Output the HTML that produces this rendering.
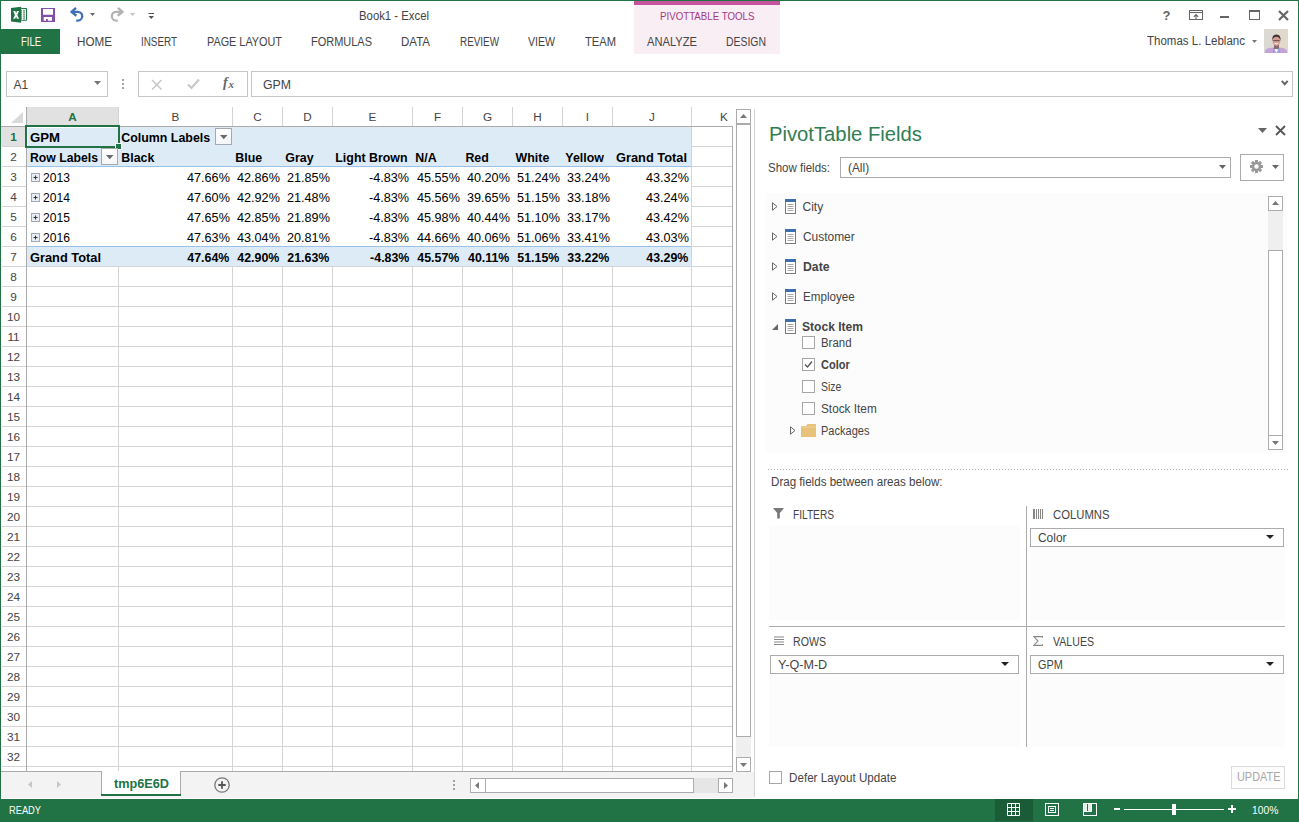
<!DOCTYPE html>
<html><head><meta charset="utf-8"><title>Book1 - Excel</title>
<style>
html,body{margin:0;padding:0;}
body{width:1299px;height:822px;overflow:hidden;position:relative;background:#fff;font-family:"Liberation Sans",sans-serif;}
.a{position:absolute;}
.t{position:absolute;white-space:nowrap;transform-origin:0 0;}
</style></head><body>
<div class="a" style="left:634px;top:1px;width:146px;height:53px;background:#FAEEF5;"></div>
<div class="a" style="left:634px;top:1px;width:146px;height:4px;background:#C5539E;"></div>
<div class="t" style="left:659.50px;top:10.69px;font-size:11px;line-height:11px;color:#9E3A85;transform:scaleX(0.8833);">PIVOTTABLE TOOLS</div>
<div class="t" style="left:359.00px;top:10.34px;font-size:12px;line-height:12px;color:#444444;transform:scaleX(0.9455);">Book1 - Excel</div>
<svg class="a" style="left:11px;top:6px;" width="17" height="18" viewBox="0 0 17 18"><rect x="10" y="1.9" width="6.1" height="12.8" rx="1" fill="#1F7244"/>
<path d="M0 2 L10.2 0.8 V16.8 L0 15.6 Z" fill="#1F7244"/>
<rect x="10.2" y="3.1" width="4.8" height="10.8" fill="#fff"/>
<path d="M12.1 4.9 H14 M12.1 6.9 H14 M12.1 8.9 H14 M12.1 10.9 H14 M12.1 12.9 H14 M10 4.9 H11.1 M10 6.9 H11.1 M10 8.9 H11.1 M10 10.9 H11.1 M10 12.9 H11.1" stroke="#1F7244" stroke-width="1"/>
<path d="M2.2 5 L4.3 5 L5.1 7.1 L5.9 5 L8 5 L6.3 8.9 L8.1 12.8 L6 12.8 L5.1 10.7 L4.2 12.8 L2.1 12.8 L3.9 8.9 Z" fill="#fff"/></svg>
<svg class="a" style="left:41px;top:8px;" width="14" height="14" viewBox="0 0 14 14"><path d="M0 0 H14 V14 H0 Z M2 1 V6.8 H12 V1 Z M2.7 9 V12.7 H11 V9 Z" fill="#8350A7" fill-rule="evenodd"/>
<rect x="5" y="11" width="1.8" height="2" fill="#8350A7"/></svg>
<svg class="a" style="left:68px;top:6px;" width="18" height="17" viewBox="0 0 18 17"><path d="M3.5 5.8 H9.8 A4.4 4.4 0 0 1 9.8 14.6 H8.2" fill="none" stroke="#3E70B8" stroke-width="2.3"/>
<path d="M8 1.8 L3.6 5.9 L8.4 9.8" fill="none" stroke="#3E70B8" stroke-width="2.4"/></svg>
<svg class="a" style="left:90px;top:13px;" width="6" height="4" viewBox="0 0 6 4"><path d="M0 0 H5 L2.5 3 Z" fill="#666"/></svg>
<svg class="a" style="left:108px;top:6px;" width="18" height="17" viewBox="0 0 18 17"><path d="M14.5 5.8 H8.2 A4.4 4.4 0 0 0 8.2 14.6 H9.8" fill="none" stroke="#B3B3B3" stroke-width="2.3"/>
<path d="M10 1.8 L14.4 5.9 L9.6 9.8" fill="none" stroke="#B3B3B3" stroke-width="2.4"/></svg>
<svg class="a" style="left:130px;top:13px;" width="6" height="4" viewBox="0 0 6 4"><path d="M0 0 H5 L2.5 3 Z" fill="#C0C0C0"/></svg>
<svg class="a" style="left:148px;top:12px;" width="7" height="8" viewBox="0 0 7 8"><path d="M0.5 1.5 H6" stroke="#555" stroke-width="1"/><path d="M0.5 4 H6 L3.25 7 Z" fill="#555"/></svg>
<div class="t" style="left:1162.50px;top:8.80px;font-size:13px;line-height:13px;font-weight:bold;color:#666;">?</div>
<svg class="a" style="left:1189px;top:10px;" width="14" height="11" viewBox="0 0 14 11"><rect x="0.5" y="0.5" width="13" height="9" fill="none" stroke="#666"/>
<path d="M0.5 2.5 H13.5" stroke="#666"/>
<path d="M7 9.5 V4.5 M4.8 6.8 L7 4.5 L9.2 6.8" fill="none" stroke="#666" stroke-width="1.1"/></svg>
<div class="a" style="left:1220px;top:16px;width:9px;height:2px;background:#666;"></div>
<svg class="a" style="left:1249px;top:10px;" width="11" height="11" viewBox="0 0 11 11"><rect x="0.5" y="0.5" width="10" height="9" fill="none" stroke="#666"/><rect x="0" y="0" width="11" height="2" fill="#666"/></svg>
<svg class="a" style="left:1278px;top:10px;" width="11" height="11" viewBox="0 0 11 11"><path d="M1 1 L10 10 M10 1 L1 10" stroke="#666" stroke-width="2.2"/></svg>
<div class="a" style="left:1px;top:29px;width:59px;height:25px;background:#217346;"></div>
<div class="t" style="left:21.00px;top:35.84px;font-size:12px;line-height:12px;color:#fff;transform:scaleX(0.7892);">FILE</div>
<div class="t" style="left:77.00px;top:35.84px;font-size:12px;line-height:12px;color:#444444;transform:scaleX(0.9722);">HOME</div>
<div class="t" style="left:141.00px;top:35.84px;font-size:12px;line-height:12px;color:#444444;transform:scaleX(0.8222);">INSERT</div>
<div class="t" style="left:207.00px;top:35.84px;font-size:12px;line-height:12px;color:#444444;transform:scaleX(0.9046);">PAGE LAYOUT</div>
<div class="t" style="left:311.00px;top:35.84px;font-size:12px;line-height:12px;color:#444444;transform:scaleX(0.9149);">FORMULAS</div>
<div class="t" style="left:401.00px;top:35.84px;font-size:12px;line-height:12px;color:#444444;transform:scaleX(0.9595);">DATA</div>
<div class="t" style="left:459.50px;top:35.84px;font-size:12px;line-height:12px;color:#444444;transform:scaleX(0.8239);">REVIEW</div>
<div class="t" style="left:528.00px;top:35.84px;font-size:12px;line-height:12px;color:#444444;transform:scaleX(0.8804);">VIEW</div>
<div class="t" style="left:584.50px;top:35.84px;font-size:12px;line-height:12px;color:#444444;transform:scaleX(0.9300);">TEAM</div>
<div class="t" style="left:647.00px;top:35.84px;font-size:12px;line-height:12px;color:#444444;transform:scaleX(0.9294);">ANALYZE</div>
<div class="t" style="left:726.00px;top:35.84px;font-size:12px;line-height:12px;color:#444444;transform:scaleX(0.8694);">DESIGN</div>
<div class="t" style="left:1147.00px;top:34.84px;font-size:12px;line-height:12px;color:#444444;transform:scaleX(0.9602);">Thomas L. Leblanc</div>
<svg class="a" style="left:1252px;top:40px;" width="6" height="4" viewBox="0 0 6 4"><path d="M0 0 H5 L2.5 3 Z" fill="#777"/></svg>
<svg class="a" style="left:1264px;top:29px;" width="24" height="24" viewBox="0 0 24 24"><rect width="24" height="24" fill="#DCD9D2"/>
<rect x="14" y="0" width="10" height="24" fill="#E0D9CC"/>
<path d="M1 24 V21.5 Q3 19 9 18.5 H15.5 Q21.5 19 23 21.5 V24 Z" fill="#C3A4D8"/>
<rect x="10" y="16" width="5" height="4" fill="#8A6A70"/>
<path d="M9.6 19 V24 M15 19 V24" stroke="#55B2D6" stroke-width="0.9"/>
<path d="M10.6 20.2 H14.2 L12.4 23.4 Z" fill="#fff"/>
<ellipse cx="12.4" cy="11.4" rx="4" ry="5.3" fill="#D59C93"/>
<path d="M8.2 12 Q7.8 5.5 12.4 5.6 Q17 5.5 16.6 12 Q16 8 12.4 7.8 Q8.8 8 8.2 12 Z" fill="#3E3434"/>
<path d="M9.2 11.6 H15.6" stroke="#6A4E50" stroke-width="1"/>
<path d="M10.6 14.3 Q12.4 15.6 14.2 14.3" fill="none" stroke="#fff" stroke-width="0.9"/></svg>
<div class="a" style="left:6px;top:71px;width:102px;height:26px;background:#fff;box-shadow:inset 0 0 0 1px #C6C6C6;"></div>
<div class="t" style="left:13.50px;top:78.84px;font-size:12px;line-height:12px;color:#444444;">A1</div>
<svg class="a" style="left:94px;top:81px;" width="8" height="5" viewBox="0 0 8 5"><path d="M0 0 H7 L3.5 4 Z" fill="#777"/></svg>
<div class="a" style="left:122px;top:79px;width:2px;height:2px;background:#A3A3A3;"></div>
<div class="a" style="left:122px;top:83px;width:2px;height:2px;background:#A3A3A3;"></div>
<div class="a" style="left:122px;top:87px;width:2px;height:2px;background:#A3A3A3;"></div>
<div class="a" style="left:138px;top:71px;width:110px;height:26px;background:#fff;box-shadow:inset 0 0 0 1px #C6C6C6;"></div>
<svg class="a" style="left:151px;top:79px;" width="12" height="12" viewBox="0 0 12 12"><path d="M1 1 L10.5 10.5 M10.5 1 L1 10.5" stroke="#C4C4C4" stroke-width="1.4"/></svg>
<svg class="a" style="left:187px;top:78px;" width="13" height="12" viewBox="0 0 13 12"><path d="M1 6.5 L4.5 10 L12 1.5" fill="none" stroke="#C8C8C8" stroke-width="2.2"/></svg>
<div class="t" style="left:223px;top:76px;font-family:'Liberation Serif',serif;font-style:italic;font-weight:bold;font-size:14px;line-height:14px;color:#666;">f</div>
<div class="t" style="left:228.5px;top:78.5px;font-family:'Liberation Serif',serif;font-style:italic;font-weight:bold;font-size:11px;line-height:11px;color:#666;">x</div>
<div class="a" style="left:251px;top:71px;width:1042px;height:26px;background:#fff;box-shadow:inset 0 0 0 1px #C6C6C6;"></div>
<div class="t" style="left:263.00px;top:78.84px;font-size:12px;line-height:12px;color:#444444;transform:scaleX(1.0244);">GPM</div>
<svg class="a" style="left:1281px;top:80px;" width="8" height="6" viewBox="0 0 8 6"><path d="M0.8 0.8 L3.75 4.2 L6.7 0.8" fill="none" stroke="#666" stroke-width="2"/></svg>
<div class="a" style="left:118px;top:107px;width:1px;height:19px;background:#D4D4D4;"></div>
<div class="a" style="left:232px;top:107px;width:1px;height:19px;background:#D4D4D4;"></div>
<div class="a" style="left:282px;top:107px;width:1px;height:19px;background:#D4D4D4;"></div>
<div class="a" style="left:332px;top:107px;width:1px;height:19px;background:#D4D4D4;"></div>
<div class="a" style="left:412px;top:107px;width:1px;height:19px;background:#D4D4D4;"></div>
<div class="a" style="left:462px;top:107px;width:1px;height:19px;background:#D4D4D4;"></div>
<div class="a" style="left:512px;top:107px;width:1px;height:19px;background:#D4D4D4;"></div>
<div class="a" style="left:562px;top:107px;width:1px;height:19px;background:#D4D4D4;"></div>
<div class="a" style="left:612px;top:107px;width:1px;height:19px;background:#D4D4D4;"></div>
<div class="a" style="left:691px;top:107px;width:1px;height:19px;background:#D4D4D4;"></div>
<div class="a" style="left:27px;top:107px;width:91px;height:19px;background:#E1E1E1;"></div>
<svg class="a" style="left:11px;top:112px;" width="13" height="12" viewBox="0 0 13 12"><path d="M12 0 V11 H0 Z" fill="#DADADA"/></svg>
<div class="t" style="left:68.28px;top:110.80px;font-size:11.7px;line-height:11.7px;font-weight:bold;color:#217346;">A</div>
<div class="t" style="left:171.60px;top:110.80px;font-size:11.7px;line-height:11.7px;color:#444444;">B</div>
<div class="t" style="left:253.28px;top:110.80px;font-size:11.7px;line-height:11.7px;color:#444444;">C</div>
<div class="t" style="left:303.28px;top:110.80px;font-size:11.7px;line-height:11.7px;color:#444444;">D</div>
<div class="t" style="left:368.60px;top:110.80px;font-size:11.7px;line-height:11.7px;color:#444444;">E</div>
<div class="t" style="left:433.93px;top:110.80px;font-size:11.7px;line-height:11.7px;color:#444444;">F</div>
<div class="t" style="left:482.95px;top:110.80px;font-size:11.7px;line-height:11.7px;color:#444444;">G</div>
<div class="t" style="left:533.28px;top:110.80px;font-size:11.7px;line-height:11.7px;color:#444444;">H</div>
<div class="t" style="left:585.87px;top:110.80px;font-size:11.7px;line-height:11.7px;color:#444444;">I</div>
<div class="t" style="left:649.08px;top:110.80px;font-size:11.7px;line-height:11.7px;color:#444444;">J</div>
<div class="t" style="left:720.10px;top:110.80px;font-size:11.7px;line-height:11.7px;color:#444444;">K</div>
<div class="a" style="left:1px;top:126px;width:732px;height:1px;background:#ABABAB;"></div>
<div class="a" style="left:26px;top:107px;width:1px;height:665px;background:#ABABAB;"></div>
<div class="a" style="left:1px;top:127px;width:25px;height:19px;background:#E1E1E1;"></div>
<div class="a" style="left:2px;top:146px;width:24px;height:1px;background:#D4D4D4;"></div>
<div class="t" style="left:10.22px;top:132.01px;font-size:11.8px;line-height:11.8px;font-weight:bold;color:#217346;">1</div>
<div class="a" style="left:2px;top:166px;width:24px;height:1px;background:#D4D4D4;"></div>
<div class="t" style="left:10.22px;top:152.01px;font-size:11.8px;line-height:11.8px;color:#444444;">2</div>
<div class="a" style="left:2px;top:186px;width:24px;height:1px;background:#D4D4D4;"></div>
<div class="t" style="left:10.22px;top:172.01px;font-size:11.8px;line-height:11.8px;color:#444444;">3</div>
<div class="a" style="left:2px;top:206px;width:24px;height:1px;background:#D4D4D4;"></div>
<div class="t" style="left:10.22px;top:192.01px;font-size:11.8px;line-height:11.8px;color:#444444;">4</div>
<div class="a" style="left:2px;top:226px;width:24px;height:1px;background:#D4D4D4;"></div>
<div class="t" style="left:10.22px;top:212.01px;font-size:11.8px;line-height:11.8px;color:#444444;">5</div>
<div class="a" style="left:2px;top:246px;width:24px;height:1px;background:#D4D4D4;"></div>
<div class="t" style="left:10.22px;top:232.01px;font-size:11.8px;line-height:11.8px;color:#444444;">6</div>
<div class="a" style="left:2px;top:266px;width:24px;height:1px;background:#D4D4D4;"></div>
<div class="t" style="left:10.22px;top:252.01px;font-size:11.8px;line-height:11.8px;color:#444444;">7</div>
<div class="a" style="left:2px;top:286px;width:24px;height:1px;background:#D4D4D4;"></div>
<div class="t" style="left:10.22px;top:272.01px;font-size:11.8px;line-height:11.8px;color:#444444;">8</div>
<div class="a" style="left:2px;top:306px;width:24px;height:1px;background:#D4D4D4;"></div>
<div class="t" style="left:10.22px;top:292.01px;font-size:11.8px;line-height:11.8px;color:#444444;">9</div>
<div class="a" style="left:2px;top:326px;width:24px;height:1px;background:#D4D4D4;"></div>
<div class="t" style="left:6.94px;top:312.01px;font-size:11.8px;line-height:11.8px;color:#444444;">10</div>
<div class="a" style="left:2px;top:346px;width:24px;height:1px;background:#D4D4D4;"></div>
<div class="t" style="left:7.38px;top:332.01px;font-size:11.8px;line-height:11.8px;color:#444444;">11</div>
<div class="a" style="left:2px;top:366px;width:24px;height:1px;background:#D4D4D4;"></div>
<div class="t" style="left:6.94px;top:352.01px;font-size:11.8px;line-height:11.8px;color:#444444;">12</div>
<div class="a" style="left:2px;top:386px;width:24px;height:1px;background:#D4D4D4;"></div>
<div class="t" style="left:6.94px;top:372.01px;font-size:11.8px;line-height:11.8px;color:#444444;">13</div>
<div class="a" style="left:2px;top:406px;width:24px;height:1px;background:#D4D4D4;"></div>
<div class="t" style="left:6.94px;top:392.01px;font-size:11.8px;line-height:11.8px;color:#444444;">14</div>
<div class="a" style="left:2px;top:426px;width:24px;height:1px;background:#D4D4D4;"></div>
<div class="t" style="left:6.94px;top:412.01px;font-size:11.8px;line-height:11.8px;color:#444444;">15</div>
<div class="a" style="left:2px;top:446px;width:24px;height:1px;background:#D4D4D4;"></div>
<div class="t" style="left:6.94px;top:432.01px;font-size:11.8px;line-height:11.8px;color:#444444;">16</div>
<div class="a" style="left:2px;top:466px;width:24px;height:1px;background:#D4D4D4;"></div>
<div class="t" style="left:6.94px;top:452.01px;font-size:11.8px;line-height:11.8px;color:#444444;">17</div>
<div class="a" style="left:2px;top:486px;width:24px;height:1px;background:#D4D4D4;"></div>
<div class="t" style="left:6.94px;top:472.01px;font-size:11.8px;line-height:11.8px;color:#444444;">18</div>
<div class="a" style="left:2px;top:506px;width:24px;height:1px;background:#D4D4D4;"></div>
<div class="t" style="left:6.94px;top:492.01px;font-size:11.8px;line-height:11.8px;color:#444444;">19</div>
<div class="a" style="left:2px;top:526px;width:24px;height:1px;background:#D4D4D4;"></div>
<div class="t" style="left:6.94px;top:512.01px;font-size:11.8px;line-height:11.8px;color:#444444;">20</div>
<div class="a" style="left:2px;top:546px;width:24px;height:1px;background:#D4D4D4;"></div>
<div class="t" style="left:6.94px;top:532.01px;font-size:11.8px;line-height:11.8px;color:#444444;">21</div>
<div class="a" style="left:2px;top:566px;width:24px;height:1px;background:#D4D4D4;"></div>
<div class="t" style="left:6.94px;top:552.01px;font-size:11.8px;line-height:11.8px;color:#444444;">22</div>
<div class="a" style="left:2px;top:586px;width:24px;height:1px;background:#D4D4D4;"></div>
<div class="t" style="left:6.94px;top:572.01px;font-size:11.8px;line-height:11.8px;color:#444444;">23</div>
<div class="a" style="left:2px;top:606px;width:24px;height:1px;background:#D4D4D4;"></div>
<div class="t" style="left:6.94px;top:592.01px;font-size:11.8px;line-height:11.8px;color:#444444;">24</div>
<div class="a" style="left:2px;top:626px;width:24px;height:1px;background:#D4D4D4;"></div>
<div class="t" style="left:6.94px;top:612.01px;font-size:11.8px;line-height:11.8px;color:#444444;">25</div>
<div class="a" style="left:2px;top:646px;width:24px;height:1px;background:#D4D4D4;"></div>
<div class="t" style="left:6.94px;top:632.01px;font-size:11.8px;line-height:11.8px;color:#444444;">26</div>
<div class="a" style="left:2px;top:666px;width:24px;height:1px;background:#D4D4D4;"></div>
<div class="t" style="left:6.94px;top:652.01px;font-size:11.8px;line-height:11.8px;color:#444444;">27</div>
<div class="a" style="left:2px;top:686px;width:24px;height:1px;background:#D4D4D4;"></div>
<div class="t" style="left:6.94px;top:672.01px;font-size:11.8px;line-height:11.8px;color:#444444;">28</div>
<div class="a" style="left:2px;top:706px;width:24px;height:1px;background:#D4D4D4;"></div>
<div class="t" style="left:6.94px;top:692.01px;font-size:11.8px;line-height:11.8px;color:#444444;">29</div>
<div class="a" style="left:2px;top:726px;width:24px;height:1px;background:#D4D4D4;"></div>
<div class="t" style="left:6.94px;top:712.01px;font-size:11.8px;line-height:11.8px;color:#444444;">30</div>
<div class="a" style="left:2px;top:746px;width:24px;height:1px;background:#D4D4D4;"></div>
<div class="t" style="left:6.94px;top:732.01px;font-size:11.8px;line-height:11.8px;color:#444444;">31</div>
<div class="a" style="left:2px;top:766px;width:24px;height:1px;background:#D4D4D4;"></div>
<div class="t" style="left:6.94px;top:752.01px;font-size:11.8px;line-height:11.8px;color:#444444;">32</div>
<div class="a" style="left:27px;top:146px;width:705px;height:1px;background:#D4D4D4;"></div>
<div class="a" style="left:27px;top:166px;width:705px;height:1px;background:#D4D4D4;"></div>
<div class="a" style="left:27px;top:186px;width:705px;height:1px;background:#D4D4D4;"></div>
<div class="a" style="left:27px;top:206px;width:705px;height:1px;background:#D4D4D4;"></div>
<div class="a" style="left:27px;top:226px;width:705px;height:1px;background:#D4D4D4;"></div>
<div class="a" style="left:27px;top:246px;width:705px;height:1px;background:#D4D4D4;"></div>
<div class="a" style="left:27px;top:266px;width:705px;height:1px;background:#D4D4D4;"></div>
<div class="a" style="left:27px;top:286px;width:705px;height:1px;background:#D4D4D4;"></div>
<div class="a" style="left:27px;top:306px;width:705px;height:1px;background:#D4D4D4;"></div>
<div class="a" style="left:27px;top:326px;width:705px;height:1px;background:#D4D4D4;"></div>
<div class="a" style="left:27px;top:346px;width:705px;height:1px;background:#D4D4D4;"></div>
<div class="a" style="left:27px;top:366px;width:705px;height:1px;background:#D4D4D4;"></div>
<div class="a" style="left:27px;top:386px;width:705px;height:1px;background:#D4D4D4;"></div>
<div class="a" style="left:27px;top:406px;width:705px;height:1px;background:#D4D4D4;"></div>
<div class="a" style="left:27px;top:426px;width:705px;height:1px;background:#D4D4D4;"></div>
<div class="a" style="left:27px;top:446px;width:705px;height:1px;background:#D4D4D4;"></div>
<div class="a" style="left:27px;top:466px;width:705px;height:1px;background:#D4D4D4;"></div>
<div class="a" style="left:27px;top:486px;width:705px;height:1px;background:#D4D4D4;"></div>
<div class="a" style="left:27px;top:506px;width:705px;height:1px;background:#D4D4D4;"></div>
<div class="a" style="left:27px;top:526px;width:705px;height:1px;background:#D4D4D4;"></div>
<div class="a" style="left:27px;top:546px;width:705px;height:1px;background:#D4D4D4;"></div>
<div class="a" style="left:27px;top:566px;width:705px;height:1px;background:#D4D4D4;"></div>
<div class="a" style="left:27px;top:586px;width:705px;height:1px;background:#D4D4D4;"></div>
<div class="a" style="left:27px;top:606px;width:705px;height:1px;background:#D4D4D4;"></div>
<div class="a" style="left:27px;top:626px;width:705px;height:1px;background:#D4D4D4;"></div>
<div class="a" style="left:27px;top:646px;width:705px;height:1px;background:#D4D4D4;"></div>
<div class="a" style="left:27px;top:666px;width:705px;height:1px;background:#D4D4D4;"></div>
<div class="a" style="left:27px;top:686px;width:705px;height:1px;background:#D4D4D4;"></div>
<div class="a" style="left:27px;top:706px;width:705px;height:1px;background:#D4D4D4;"></div>
<div class="a" style="left:27px;top:726px;width:705px;height:1px;background:#D4D4D4;"></div>
<div class="a" style="left:27px;top:746px;width:705px;height:1px;background:#D4D4D4;"></div>
<div class="a" style="left:27px;top:766px;width:705px;height:1px;background:#D4D4D4;"></div>
<div class="a" style="left:118px;top:127px;width:1px;height:644px;background:#D4D4D4;"></div>
<div class="a" style="left:232px;top:127px;width:1px;height:644px;background:#D4D4D4;"></div>
<div class="a" style="left:282px;top:127px;width:1px;height:644px;background:#D4D4D4;"></div>
<div class="a" style="left:332px;top:127px;width:1px;height:644px;background:#D4D4D4;"></div>
<div class="a" style="left:412px;top:127px;width:1px;height:644px;background:#D4D4D4;"></div>
<div class="a" style="left:462px;top:127px;width:1px;height:644px;background:#D4D4D4;"></div>
<div class="a" style="left:512px;top:127px;width:1px;height:644px;background:#D4D4D4;"></div>
<div class="a" style="left:562px;top:127px;width:1px;height:644px;background:#D4D4D4;"></div>
<div class="a" style="left:612px;top:127px;width:1px;height:644px;background:#D4D4D4;"></div>
<div class="a" style="left:691px;top:127px;width:1px;height:644px;background:#D4D4D4;"></div>
<div class="a" style="left:732px;top:126px;width:1px;height:646px;background:#ABABAB;"></div>
<div class="a" style="left:1px;top:771px;width:732px;height:1px;background:#ABABAB;"></div>
<div class="a" style="left:27px;top:127px;width:664px;height:39px;background:#DDEBF7;"></div>
<div class="a" style="left:27px;top:166px;width:664px;height:1px;background:#9BC2E6;"></div>
<div class="a" style="left:27px;top:167px;width:664px;height:79px;background:#FFFFFF;"></div>
<div class="a" style="left:27px;top:246px;width:664px;height:1px;background:#9BC2E6;"></div>
<div class="a" style="left:27px;top:247px;width:664px;height:19px;background:#DDEBF7;"></div>
<div class="a" style="left:25px;top:125px;width:95px;height:23px;box-sizing:border-box;border:2px solid #217346;"></div>
<div class="a" style="left:27px;top:127px;width:91px;height:19px;box-sizing:border-box;border:1px solid #fff;border-right:0;border-bottom:0;"></div>
<div class="a" style="left:115px;top:143px;width:7px;height:7px;background:#fff;"></div>
<div class="a" style="left:116px;top:144px;width:5px;height:5px;background:#217346;"></div>
<div class="t" style="left:29.50px;top:131.50px;font-size:12.4px;line-height:12.4px;font-weight:bold;color:#000;transform:scaleX(1.0621);">GPM</div>
<div class="t" style="left:121.30px;top:131.50px;font-size:12.4px;line-height:12.4px;font-weight:bold;color:#000;">Column Labels</div>
<div class="t" style="left:29.50px;top:151.50px;font-size:12.4px;line-height:12.4px;font-weight:bold;color:#000;transform:scaleX(0.9869);">Row Labels</div>
<div class="a" style="left:215px;top:128px;width:17px;height:17px;background:linear-gradient(#FFFFFF,#F4F5F7);box-shadow:inset 0 0 0 1px #A5A9AE;"></div>
<svg class="a" style="left:220px;top:135px;" width="8" height="5" viewBox="0 0 8 5"><path d="M0 0 H7.5 L3.75 4.2 Z" fill="#6A6A6A"/></svg>
<div class="a" style="left:101px;top:148px;width:17px;height:17px;background:linear-gradient(#FFFFFF,#F4F5F7);box-shadow:inset 0 0 0 1px #A5A9AE;"></div>
<svg class="a" style="left:106px;top:155px;" width="8" height="5" viewBox="0 0 8 5"><path d="M0 0 H7.5 L3.75 4.2 Z" fill="#6A6A6A"/></svg>
<div class="t" style="left:121.30px;top:151.50px;font-size:12.4px;line-height:12.4px;font-weight:bold;color:#000;">Black</div>
<div class="t" style="left:235.30px;top:151.50px;font-size:12.4px;line-height:12.4px;font-weight:bold;color:#000;">Blue</div>
<div class="t" style="left:285.30px;top:151.50px;font-size:12.4px;line-height:12.4px;font-weight:bold;color:#000;">Gray</div>
<div class="t" style="left:335.30px;top:151.50px;font-size:12.4px;line-height:12.4px;font-weight:bold;color:#000;">Light Brown</div>
<div class="t" style="left:415.30px;top:151.50px;font-size:12.4px;line-height:12.4px;font-weight:bold;color:#000;">N/A</div>
<div class="t" style="left:465.40px;top:151.50px;font-size:12.4px;line-height:12.4px;font-weight:bold;color:#000;">Red</div>
<div class="t" style="left:515.60px;top:151.50px;font-size:12.4px;line-height:12.4px;font-weight:bold;color:#000;">White</div>
<div class="t" style="left:565.30px;top:151.50px;font-size:12.4px;line-height:12.4px;font-weight:bold;color:#000;">Yellow</div>
<div class="t" style="left:615.50px;top:151.50px;font-size:12.4px;line-height:12.4px;font-weight:bold;color:#000;transform:scaleX(1.0341);">Grand Total</div>
<svg class="a" style="left:31px;top:173px;" width="9" height="9" viewBox="0 0 9 9"><rect x="0.5" y="0.5" width="8" height="8" fill="#E8EDF3" stroke="#A0A8B4"/><path d="M2.5 4.5 H6.5 M4.5 2.5 V6.5" stroke="#333" stroke-width="1"/></svg>
<div class="t" style="left:42.50px;top:171.50px;font-size:12.4px;line-height:12.4px;color:#000;transform:scaleX(0.9788);">2013</div>
<div class="t" style="left:186.50px;top:171.50px;font-size:12.4px;line-height:12.4px;color:#000;transform:scaleX(1.0200);">47.66%</div>
<div class="t" style="left:236.50px;top:171.50px;font-size:12.4px;line-height:12.4px;color:#000;transform:scaleX(1.0200);">42.86%</div>
<div class="t" style="left:286.50px;top:171.50px;font-size:12.4px;line-height:12.4px;color:#000;transform:scaleX(1.0200);">21.85%</div>
<div class="t" style="left:369.33px;top:171.50px;font-size:12.4px;line-height:12.4px;color:#000;transform:scaleX(1.0200);">-4.83%</div>
<div class="t" style="left:416.50px;top:171.50px;font-size:12.4px;line-height:12.4px;color:#000;transform:scaleX(1.0200);">45.55%</div>
<div class="t" style="left:466.50px;top:171.50px;font-size:12.4px;line-height:12.4px;color:#000;transform:scaleX(1.0200);">40.20%</div>
<div class="t" style="left:516.50px;top:171.50px;font-size:12.4px;line-height:12.4px;color:#000;transform:scaleX(1.0200);">51.24%</div>
<div class="t" style="left:566.50px;top:171.50px;font-size:12.4px;line-height:12.4px;color:#000;transform:scaleX(1.0200);">33.24%</div>
<div class="t" style="left:645.50px;top:171.50px;font-size:12.4px;line-height:12.4px;color:#000;transform:scaleX(1.0200);">43.32%</div>
<svg class="a" style="left:31px;top:193px;" width="9" height="9" viewBox="0 0 9 9"><rect x="0.5" y="0.5" width="8" height="8" fill="#E8EDF3" stroke="#A0A8B4"/><path d="M2.5 4.5 H6.5 M4.5 2.5 V6.5" stroke="#333" stroke-width="1"/></svg>
<div class="t" style="left:42.50px;top:191.50px;font-size:12.4px;line-height:12.4px;color:#000;transform:scaleX(0.9788);">2014</div>
<div class="t" style="left:186.50px;top:191.50px;font-size:12.4px;line-height:12.4px;color:#000;transform:scaleX(1.0200);">47.60%</div>
<div class="t" style="left:236.50px;top:191.50px;font-size:12.4px;line-height:12.4px;color:#000;transform:scaleX(1.0200);">42.92%</div>
<div class="t" style="left:286.50px;top:191.50px;font-size:12.4px;line-height:12.4px;color:#000;transform:scaleX(1.0200);">21.48%</div>
<div class="t" style="left:369.33px;top:191.50px;font-size:12.4px;line-height:12.4px;color:#000;transform:scaleX(1.0200);">-4.83%</div>
<div class="t" style="left:416.50px;top:191.50px;font-size:12.4px;line-height:12.4px;color:#000;transform:scaleX(1.0200);">45.56%</div>
<div class="t" style="left:466.50px;top:191.50px;font-size:12.4px;line-height:12.4px;color:#000;transform:scaleX(1.0200);">39.65%</div>
<div class="t" style="left:516.50px;top:191.50px;font-size:12.4px;line-height:12.4px;color:#000;transform:scaleX(1.0200);">51.15%</div>
<div class="t" style="left:566.50px;top:191.50px;font-size:12.4px;line-height:12.4px;color:#000;transform:scaleX(1.0200);">33.18%</div>
<div class="t" style="left:645.50px;top:191.50px;font-size:12.4px;line-height:12.4px;color:#000;transform:scaleX(1.0200);">43.24%</div>
<svg class="a" style="left:31px;top:213px;" width="9" height="9" viewBox="0 0 9 9"><rect x="0.5" y="0.5" width="8" height="8" fill="#E8EDF3" stroke="#A0A8B4"/><path d="M2.5 4.5 H6.5 M4.5 2.5 V6.5" stroke="#333" stroke-width="1"/></svg>
<div class="t" style="left:42.50px;top:211.50px;font-size:12.4px;line-height:12.4px;color:#000;transform:scaleX(0.9788);">2015</div>
<div class="t" style="left:186.50px;top:211.50px;font-size:12.4px;line-height:12.4px;color:#000;transform:scaleX(1.0200);">47.65%</div>
<div class="t" style="left:236.50px;top:211.50px;font-size:12.4px;line-height:12.4px;color:#000;transform:scaleX(1.0200);">42.85%</div>
<div class="t" style="left:286.50px;top:211.50px;font-size:12.4px;line-height:12.4px;color:#000;transform:scaleX(1.0200);">21.89%</div>
<div class="t" style="left:369.33px;top:211.50px;font-size:12.4px;line-height:12.4px;color:#000;transform:scaleX(1.0200);">-4.83%</div>
<div class="t" style="left:416.50px;top:211.50px;font-size:12.4px;line-height:12.4px;color:#000;transform:scaleX(1.0200);">45.98%</div>
<div class="t" style="left:466.50px;top:211.50px;font-size:12.4px;line-height:12.4px;color:#000;transform:scaleX(1.0200);">40.44%</div>
<div class="t" style="left:516.50px;top:211.50px;font-size:12.4px;line-height:12.4px;color:#000;transform:scaleX(1.0200);">51.10%</div>
<div class="t" style="left:566.50px;top:211.50px;font-size:12.4px;line-height:12.4px;color:#000;transform:scaleX(1.0200);">33.17%</div>
<div class="t" style="left:645.50px;top:211.50px;font-size:12.4px;line-height:12.4px;color:#000;transform:scaleX(1.0200);">43.42%</div>
<svg class="a" style="left:31px;top:233px;" width="9" height="9" viewBox="0 0 9 9"><rect x="0.5" y="0.5" width="8" height="8" fill="#E8EDF3" stroke="#A0A8B4"/><path d="M2.5 4.5 H6.5 M4.5 2.5 V6.5" stroke="#333" stroke-width="1"/></svg>
<div class="t" style="left:42.50px;top:231.50px;font-size:12.4px;line-height:12.4px;color:#000;transform:scaleX(0.9788);">2016</div>
<div class="t" style="left:186.50px;top:231.50px;font-size:12.4px;line-height:12.4px;color:#000;transform:scaleX(1.0200);">47.63%</div>
<div class="t" style="left:236.50px;top:231.50px;font-size:12.4px;line-height:12.4px;color:#000;transform:scaleX(1.0200);">43.04%</div>
<div class="t" style="left:286.50px;top:231.50px;font-size:12.4px;line-height:12.4px;color:#000;transform:scaleX(1.0200);">20.81%</div>
<div class="t" style="left:369.33px;top:231.50px;font-size:12.4px;line-height:12.4px;color:#000;transform:scaleX(1.0200);">-4.83%</div>
<div class="t" style="left:416.50px;top:231.50px;font-size:12.4px;line-height:12.4px;color:#000;transform:scaleX(1.0200);">44.66%</div>
<div class="t" style="left:466.50px;top:231.50px;font-size:12.4px;line-height:12.4px;color:#000;transform:scaleX(1.0200);">40.06%</div>
<div class="t" style="left:516.50px;top:231.50px;font-size:12.4px;line-height:12.4px;color:#000;transform:scaleX(1.0200);">51.06%</div>
<div class="t" style="left:566.50px;top:231.50px;font-size:12.4px;line-height:12.4px;color:#000;transform:scaleX(1.0200);">33.41%</div>
<div class="t" style="left:645.50px;top:231.50px;font-size:12.4px;line-height:12.4px;color:#000;transform:scaleX(1.0200);">43.03%</div>
<div class="t" style="left:29.50px;top:251.50px;font-size:12.4px;line-height:12.4px;font-weight:bold;color:#000;transform:scaleX(1.0341);">Grand Total</div>
<div class="t" style="left:187.34px;top:251.50px;font-size:12.4px;line-height:12.4px;font-weight:bold;color:#000;">47.64%</div>
<div class="t" style="left:237.34px;top:251.50px;font-size:12.4px;line-height:12.4px;font-weight:bold;color:#000;">42.90%</div>
<div class="t" style="left:287.34px;top:251.50px;font-size:12.4px;line-height:12.4px;font-weight:bold;color:#000;">21.63%</div>
<div class="t" style="left:370.11px;top:251.50px;font-size:12.4px;line-height:12.4px;font-weight:bold;color:#000;">-4.83%</div>
<div class="t" style="left:417.34px;top:251.50px;font-size:12.4px;line-height:12.4px;font-weight:bold;color:#000;">45.57%</div>
<div class="t" style="left:468.03px;top:251.50px;font-size:12.4px;line-height:12.4px;font-weight:bold;color:#000;">40.11%</div>
<div class="t" style="left:517.34px;top:251.50px;font-size:12.4px;line-height:12.4px;font-weight:bold;color:#000;">51.15%</div>
<div class="t" style="left:567.34px;top:251.50px;font-size:12.4px;line-height:12.4px;font-weight:bold;color:#000;">33.22%</div>
<div class="t" style="left:646.34px;top:251.50px;font-size:12.4px;line-height:12.4px;font-weight:bold;color:#000;">43.29%</div>
<div class="a" style="left:736px;top:737px;width:15px;height:20px;background:#EFEFEF;"></div>
<div class="a" style="left:736px;top:109px;width:15px;height:15px;background:#fff;box-shadow:inset 0 0 0 1px #ABABAB;"></div>
<svg class="a" style="left:740px;top:114px;" width="8" height="5" viewBox="0 0 8 5"><path d="M0 4 H7 L3.5 0 Z" fill="#777"/></svg>
<div class="a" style="left:736px;top:124px;width:15px;height:613px;background:#fff;box-shadow:inset 0 0 0 1px #ABABAB;"></div>
<div class="a" style="left:736px;top:757px;width:15px;height:15px;background:#fff;box-shadow:inset 0 0 0 1px #ABABAB;"></div>
<svg class="a" style="left:740px;top:763px;" width="8" height="5" viewBox="0 0 8 5"><path d="M0 0 H7 L3.5 4 Z" fill="#777"/></svg>
<div class="a" style="left:754px;top:109px;width:1px;height:688px;background:#D4D4D4;"></div>
<div class="a" style="left:1px;top:772px;width:753px;height:26px;background:#F3F3F3;"></div>
<div class="a" style="left:1px;top:771px;width:100px;height:1px;background:#ABABAB;"></div>
<div class="a" style="left:101px;top:771px;width:80px;height:25px;background:#fff;"></div>
<div class="a" style="left:101px;top:771px;width:1px;height:25px;background:#ABABAB;"></div>
<div class="a" style="left:180px;top:771px;width:1px;height:25px;background:#ABABAB;"></div>
<div class="a" style="left:101px;top:794px;width:80px;height:2px;background:#217346;"></div>
<div class="t" style="left:113.50px;top:778.42px;font-size:12.5px;line-height:12.5px;font-weight:bold;color:#217346;transform:scaleX(1.0151);">tmp6E6D</div>
<svg class="a" style="left:28px;top:781px;" width="5" height="8" viewBox="0 0 5 8"><path d="M4 0 V7 L0 3.5 Z" fill="#C6C6C6"/></svg>
<svg class="a" style="left:57px;top:781px;" width="5" height="8" viewBox="0 0 5 8"><path d="M0 0 V7 L4 3.5 Z" fill="#C6C6C6"/></svg>
<svg class="a" style="left:214px;top:777px;" width="17" height="16" viewBox="0 0 17 16"><circle cx="8" cy="8" r="7.2" fill="none" stroke="#777" stroke-width="1.3"/><path d="M4.3 8 H11.7 M8 4.3 V11.7" stroke="#555" stroke-width="1.8"/></svg>
<div class="a" style="left:453px;top:780px;width:2px;height:2px;background:#A0A0A0;"></div>
<div class="a" style="left:453px;top:784px;width:2px;height:2px;background:#A0A0A0;"></div>
<div class="a" style="left:453px;top:788px;width:2px;height:2px;background:#A0A0A0;"></div>
<div class="a" style="left:470px;top:778px;width:16px;height:15px;background:#fff;box-shadow:inset 0 0 0 1px #ABABAB;"></div>
<svg class="a" style="left:475px;top:782px;" width="5" height="8" viewBox="0 0 5 8"><path d="M4 0 V7 L0 3.5 Z" fill="#777"/></svg>
<div class="a" style="left:485px;top:778px;width:209px;height:15px;background:#fff;box-shadow:inset 0 0 0 1px #ABABAB;"></div>
<div class="a" style="left:694px;top:778px;width:24px;height:15px;background:#E6E6E6;"></div>
<div class="a" style="left:718px;top:778px;width:15px;height:15px;background:#fff;box-shadow:inset 0 0 0 1px #ABABAB;"></div>
<svg class="a" style="left:724px;top:782px;" width="5" height="8" viewBox="0 0 5 8"><path d="M0 0 V7 L4 3.5 Z" fill="#777"/></svg>
<div class="t" style="left:768.50px;top:123.65px;font-size:20.5px;line-height:20.5px;color:#2F7D52;transform:scaleX(0.9873);">PivotTable Fields</div>
<svg class="a" style="left:1258px;top:128px;" width="10" height="6" viewBox="0 0 10 6"><path d="M0 0 H9 L4.5 5 Z" fill="#666"/></svg>
<svg class="a" style="left:1275px;top:125px;" width="11" height="11" viewBox="0 0 11 11"><path d="M1 1 L10 10 M10 1 L1 10" stroke="#555" stroke-width="1.8"/></svg>
<div class="t" style="left:767.50px;top:161.84px;font-size:12px;line-height:12px;color:#444444;transform:scaleX(0.9583);">Show fields:</div>
<div class="a" style="left:840px;top:157px;width:391px;height:21px;background:#fff;box-shadow:inset 0 0 0 1px #ABABAB;"></div>
<div class="t" style="left:847.50px;top:161.84px;font-size:12px;line-height:12px;color:#444444;transform:scaleX(0.9893);">(All)</div>
<svg class="a" style="left:1219px;top:165px;" width="8" height="5" viewBox="0 0 8 5"><path d="M0 0 H7 L3.5 4 Z" fill="#666"/></svg>
<div class="a" style="left:1240px;top:154px;width:44px;height:27px;background:#fff;box-shadow:inset 0 0 0 1px #ABABAB;"></div>
<svg class="a" style="left:1250px;top:160px;" width="14" height="14" viewBox="0 0 14 14"><g fill="#999"><circle cx="6.5" cy="6.5" r="4.5"/><rect x="5" y="0" width="3" height="13"/><rect x="0" y="5" width="13" height="3"/><rect x="5" y="0" width="3" height="13" transform="rotate(45 6.5 6.5)"/><rect x="5" y="0" width="3" height="13" transform="rotate(-45 6.5 6.5)"/></g><circle cx="6.5" cy="6.5" r="2.2" fill="#fff"/></svg>
<svg class="a" style="left:1272px;top:165px;" width="8" height="5" viewBox="0 0 8 5"><path d="M0 0 H7 L3.5 4 Z" fill="#666"/></svg>
<div class="a" style="left:766px;top:193px;width:521px;height:260px;background:#FCFCFC;"></div>
<svg class="a" style="left:772px;top:202px;" width="6" height="10" viewBox="0 0 6 10"><path d="M0.5 0.8 L5 4.5 L0.5 8.2 Z" fill="none" stroke="#666" stroke-width="1"/></svg>
<svg class="a" style="left:785px;top:199px;" width="11" height="15" viewBox="0 0 11 15"><rect x="0.5" y="0.5" width="10" height="14" fill="#fff" stroke="#7A7A7A"/><rect x="0" y="0" width="11" height="3" fill="#3D6FAE"/><path d="M2.5 5.5 H8.5 M2.5 7.5 H8.5 M2.5 9.5 H8.5 M2.5 11.5 H8.5" stroke="#A8A8A8" stroke-width="1"/></svg>
<div class="t" style="left:802.50px;top:200.64px;font-size:12px;line-height:12px;color:#444444;">City</div>
<svg class="a" style="left:772px;top:232px;" width="6" height="10" viewBox="0 0 6 10"><path d="M0.5 0.8 L5 4.5 L0.5 8.2 Z" fill="none" stroke="#666" stroke-width="1"/></svg>
<svg class="a" style="left:785px;top:229px;" width="11" height="15" viewBox="0 0 11 15"><rect x="0.5" y="0.5" width="10" height="14" fill="#fff" stroke="#7A7A7A"/><rect x="0" y="0" width="11" height="3" fill="#3D6FAE"/><path d="M2.5 5.5 H8.5 M2.5 7.5 H8.5 M2.5 9.5 H8.5 M2.5 11.5 H8.5" stroke="#A8A8A8" stroke-width="1"/></svg>
<div class="t" style="left:802.50px;top:230.64px;font-size:12px;line-height:12px;color:#444444;transform:scaleX(0.9940);">Customer</div>
<svg class="a" style="left:772px;top:262px;" width="6" height="10" viewBox="0 0 6 10"><path d="M0.5 0.8 L5 4.5 L0.5 8.2 Z" fill="none" stroke="#666" stroke-width="1"/></svg>
<svg class="a" style="left:785px;top:259px;" width="11" height="15" viewBox="0 0 11 15"><rect x="0.5" y="0.5" width="10" height="14" fill="#fff" stroke="#7A7A7A"/><rect x="0" y="0" width="11" height="3" fill="#3D6FAE"/><path d="M2.5 5.5 H8.5 M2.5 7.5 H8.5 M2.5 9.5 H8.5 M2.5 11.5 H8.5" stroke="#A8A8A8" stroke-width="1"/></svg>
<div class="t" style="left:802.50px;top:260.64px;font-size:12px;line-height:12px;font-weight:bold;color:#444444;transform:scaleX(1.0227);">Date</div>
<svg class="a" style="left:772px;top:292px;" width="6" height="10" viewBox="0 0 6 10"><path d="M0.5 0.8 L5 4.5 L0.5 8.2 Z" fill="none" stroke="#666" stroke-width="1"/></svg>
<svg class="a" style="left:785px;top:289px;" width="11" height="15" viewBox="0 0 11 15"><rect x="0.5" y="0.5" width="10" height="14" fill="#fff" stroke="#7A7A7A"/><rect x="0" y="0" width="11" height="3" fill="#3D6FAE"/><path d="M2.5 5.5 H8.5 M2.5 7.5 H8.5 M2.5 9.5 H8.5 M2.5 11.5 H8.5" stroke="#A8A8A8" stroke-width="1"/></svg>
<div class="t" style="left:802.50px;top:290.64px;font-size:12px;line-height:12px;color:#444444;transform:scaleX(0.9689);">Employee</div>
<svg class="a" style="left:772px;top:324px;" width="7" height="7" viewBox="0 0 7 7"><path d="M6 0 V6 H0 Z" fill="#666"/></svg>
<svg class="a" style="left:785px;top:319px;" width="11" height="15" viewBox="0 0 11 15"><rect x="0.5" y="0.5" width="10" height="14" fill="#fff" stroke="#7A7A7A"/><rect x="0" y="0" width="11" height="3" fill="#3D6FAE"/><path d="M2.5 5.5 H8.5 M2.5 7.5 H8.5 M2.5 9.5 H8.5 M2.5 11.5 H8.5" stroke="#A8A8A8" stroke-width="1"/></svg>
<div class="t" style="left:802.00px;top:320.64px;font-size:12px;line-height:12px;font-weight:bold;color:#444444;transform:scaleX(1.0052);">Stock Item</div>
<div class="a" style="left:802px;top:336px;width:13px;height:13px;background:#fff;box-shadow:inset 0 0 0 1px #A6A6A6;"></div>
<div class="t" style="left:821.00px;top:336.84px;font-size:12px;line-height:12px;color:#444444;transform:scaleX(0.9525);">Brand</div>
<div class="a" style="left:802px;top:358px;width:13px;height:13px;background:#fff;box-shadow:inset 0 0 0 1px #A6A6A6;"></div>
<svg class="a" style="left:802px;top:358px;" width="13" height="13" viewBox="0 0 13 13"><path d="M3 6.5 L5.5 9 L10 3.5" fill="none" stroke="#555" stroke-width="1.3"/></svg>
<div class="t" style="left:821.00px;top:358.84px;font-size:12px;line-height:12px;font-weight:bold;color:#444444;transform:scaleX(0.9192);">Color</div>
<div class="a" style="left:802px;top:380px;width:13px;height:13px;background:#fff;box-shadow:inset 0 0 0 1px #A6A6A6;"></div>
<div class="t" style="left:821.00px;top:380.84px;font-size:12px;line-height:12px;color:#444444;transform:scaleX(0.8696);">Size</div>
<div class="a" style="left:802px;top:402px;width:13px;height:13px;background:#fff;box-shadow:inset 0 0 0 1px #A6A6A6;"></div>
<div class="t" style="left:821.00px;top:402.84px;font-size:12px;line-height:12px;color:#444444;transform:scaleX(0.9826);">Stock Item</div>
<svg class="a" style="left:790px;top:426px;" width="6" height="10" viewBox="0 0 6 10"><path d="M0.5 0.8 L5 4.5 L0.5 8.2 Z" fill="none" stroke="#666" stroke-width="1"/></svg>
<svg class="a" style="left:801px;top:424px;" width="15" height="13" viewBox="0 0 15 13"><path d="M0 2 H5 L6.5 0 H15 V13 H0 Z" fill="#E8C27A"/><path d="M0 3 H15" stroke="#F0D49A"/></svg>
<div class="t" style="left:820.50px;top:424.84px;font-size:12px;line-height:12px;color:#444444;transform:scaleX(0.9203);">Packages</div>
<div class="a" style="left:1268px;top:196px;width:15px;height:15px;background:#fff;box-shadow:inset 0 0 0 1px #ABABAB;"></div>
<svg class="a" style="left:1272px;top:201px;" width="8" height="5" viewBox="0 0 8 5"><path d="M0 4 H7 L3.5 0 Z" fill="#777"/></svg>
<div class="a" style="left:1268px;top:211px;width:15px;height:40px;background:#EFEFEF;"></div>
<div class="a" style="left:1268px;top:250px;width:15px;height:186px;background:#fff;box-shadow:inset 0 0 0 1px #ABABAB;"></div>
<div class="a" style="left:1268px;top:435px;width:15px;height:15px;background:#fff;box-shadow:inset 0 0 0 1px #ABABAB;"></div>
<svg class="a" style="left:1272px;top:441px;" width="8" height="5" viewBox="0 0 8 5"><path d="M0 0 H7 L3.5 4 Z" fill="#777"/></svg>
<div class="a" style="left:768px;top:469px;width:521px;height:1px;background:repeating-linear-gradient(90deg,#B0B0B0 0 1px,transparent 1px 3px);"></div>
<div class="t" style="left:770.50px;top:476.34px;font-size:12px;line-height:12px;color:#444444;transform:scaleX(0.9666);">Drag fields between areas below:</div>
<div class="a" style="left:769px;top:526px;width:251px;height:94px;background:#FCFCFC;"></div>
<div class="a" style="left:1030px;top:546px;width:255px;height:74px;background:#FCFCFC;"></div>
<div class="a" style="left:769px;top:673px;width:251px;height:74px;background:#FCFCFC;"></div>
<div class="a" style="left:1030px;top:673px;width:255px;height:74px;background:#FCFCFC;"></div>
<div class="a" style="left:1026px;top:506px;width:1px;height:241px;background:#ABABAB;"></div>
<div class="a" style="left:769px;top:626px;width:516px;height:1px;background:#ABABAB;"></div>
<svg class="a" style="left:773px;top:508px;" width="11" height="11" viewBox="0 0 11 11"><path d="M0 0 H11 L6.8 5 V10.5 H4.2 V5 Z" fill="#777"/></svg>
<div class="t" style="left:792.50px;top:509.04px;font-size:12px;line-height:12px;color:#444444;transform:scaleX(0.8462);">FILTERS</div>
<svg class="a" style="left:1033px;top:509px;" width="11" height="10" viewBox="0 0 11 10"><path d="M0.5 0 V10 M3.5 0 V10 M5.5 0 V10 M7.5 0 V10 M9.5 0 V10" stroke="#888" stroke-width="1"/><rect x="0" y="0" width="2" height="10" fill="#888"/></svg>
<div class="t" style="left:1052.50px;top:509.04px;font-size:12px;line-height:12px;color:#444444;transform:scaleX(0.9416);">COLUMNS</div>
<svg class="a" style="left:774px;top:636px;" width="10" height="10" viewBox="0 0 10 10"><path d="M0 1 H10 M0 3.5 H10 M0 6 H10 M0 8.5 H10" stroke="#888" stroke-width="1.2"/></svg>
<div class="t" style="left:792.50px;top:636.14px;font-size:12px;line-height:12px;color:#444444;transform:scaleX(0.8840);">ROWS</div>
<svg class="a" style="left:1033px;top:636px;" width="10" height="10" viewBox="0 0 10 10"><path d="M9.5 1.8 V0.6 H0.8 L5 5 L0.8 9.4 H9.5 V8.2" fill="none" stroke="#888" stroke-width="1.1"/></svg>
<div class="t" style="left:1052.50px;top:636.14px;font-size:12px;line-height:12px;color:#444444;transform:scaleX(0.8824);">VALUES</div>
<div class="a" style="left:1030px;top:528px;width:254px;height:19px;background:#fff;box-shadow:inset 0 0 0 1px #ABABAB;"></div>
<div class="t" style="left:1037.50px;top:532.14px;font-size:12px;line-height:12px;color:#444444;transform:scaleX(0.9939);">Color</div>
<svg class="a" style="left:1266px;top:535px;" width="9" height="5" viewBox="0 0 9 5"><path d="M0 0 H8 L4 4 Z" fill="#222"/></svg>
<div class="a" style="left:770px;top:655px;width:249px;height:19px;background:#fff;box-shadow:inset 0 0 0 1px #ABABAB;"></div>
<div class="t" style="left:777.50px;top:659.14px;font-size:12px;line-height:12px;color:#444444;transform:scaleX(1.0493);">Y-Q-M-D</div>
<svg class="a" style="left:1001px;top:662px;" width="9" height="5" viewBox="0 0 9 5"><path d="M0 0 H8 L4 4 Z" fill="#222"/></svg>
<div class="a" style="left:1030px;top:655px;width:254px;height:19px;background:#fff;box-shadow:inset 0 0 0 1px #ABABAB;"></div>
<div class="t" style="left:1037.50px;top:659.14px;font-size:12px;line-height:12px;color:#444444;transform:scaleX(0.9073);">GPM</div>
<svg class="a" style="left:1266px;top:662px;" width="9" height="5" viewBox="0 0 9 5"><path d="M0 0 H8 L4 4 Z" fill="#222"/></svg>
<div class="a" style="left:769px;top:771px;width:13px;height:13px;background:#fff;box-shadow:inset 0 0 0 1px #A6A6A6;"></div>
<div class="t" style="left:788.50px;top:772.14px;font-size:12px;line-height:12px;color:#444444;transform:scaleX(0.9708);">Defer Layout Update</div>
<div class="a" style="left:1231px;top:766px;width:54px;height:23px;background:#FDFDFD;box-shadow:inset 0 0 0 1px #DADADA;"></div>
<div class="t" style="left:1236.80px;top:771.42px;font-size:12.5px;line-height:12.5px;color:#A8A8A8;transform:scaleX(0.8719);">UPDATE</div>
<div class="a" style="left:0px;top:799px;width:1299px;height:23px;background:#217346;"></div>
<div class="t" style="left:9.00px;top:804.69px;font-size:11px;line-height:11px;color:#fff;transform:scaleX(0.8444);">READY</div>
<div class="a" style="left:995px;top:799px;width:38px;height:22px;background:#1A5C38;"></div>
<svg class="a" style="left:1007px;top:803px;" width="13" height="13" viewBox="0 0 13 13"><path d="M0.5 0.5 H12.5 V12.5 H0.5 Z M4.5 0.5 V12.5 M8.5 0.5 V12.5 M0.5 4.5 H12.5 M0.5 8.5 H12.5" fill="none" stroke="#fff" stroke-width="1"/></svg>
<svg class="a" style="left:1045px;top:803px;" width="14" height="13" viewBox="0 0 14 13"><rect x="0.5" y="0.5" width="13" height="12" fill="none" stroke="#fff"/><rect x="3.5" y="3.5" width="7" height="6" fill="none" stroke="#fff"/><path d="M5 5.5 H9 M5 7.5 H9" stroke="#fff"/></svg>
<svg class="a" style="left:1083px;top:803px;" width="14" height="13" viewBox="0 0 14 13"><rect x="0.5" y="0.5" width="13" height="12" fill="none" stroke="#fff"/><rect x="1" y="1" width="3" height="7" fill="#E6EEE8"/><rect x="5" y="1" width="3" height="7" fill="#E6EEE8"/><path d="M8.5 0.5 V8.5 H0.5" fill="none" stroke="#fff"/></svg>
<div class="a" style="left:1114px;top:808px;width:6px;height:2px;background:#fff;"></div>
<div class="a" style="left:1124px;top:809px;width:100px;height:1px;background:#fff;"></div>
<div class="a" style="left:1172px;top:804px;width:4px;height:11px;background:#fff;"></div>
<div class="a" style="left:1228px;top:808px;width:8px;height:2px;background:#fff;"></div>
<div class="a" style="left:1231px;top:805px;width:2px;height:8px;background:#fff;"></div>
<div class="t" style="left:1251.50px;top:805.19px;font-size:11px;line-height:11px;color:#fff;transform:scaleX(0.9348);">100%</div>
<div class="a" style="left:0px;top:0px;width:1px;height:822px;background:#217346;"></div>
<div class="a" style="left:1298px;top:0px;width:1px;height:822px;background:#217346;"></div>
<div class="a" style="left:0px;top:0px;width:1299px;height:1px;background:#217346;"></div>
</body></html>
